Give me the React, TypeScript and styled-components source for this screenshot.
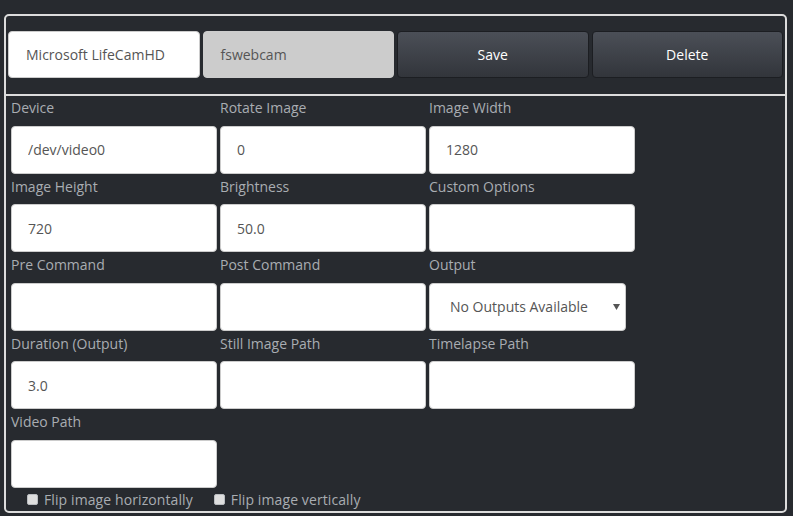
import styled, { createGlobalStyle } from "styled-components";

const Global = createGlobalStyle`
  html, body {
    margin: 0;
    padding: 0;
    background: #272a2f;
  }
  body {
    font-family: "Open Sans", "Liberation Sans", sans-serif;
    font-size: 14px;
  }
`;

const Page = styled.div`
  padding: 14px 6px 4px 4px;
`;

const Panel = styled.div`
  border: 2px solid #dcdcdc;
  border-radius: 5px;
`;

const TopRow = styled.div`
  display: grid;
  grid-template-columns: repeat(4, 1fr);
  gap: 3px;
  padding: 15px 2px 16px;
`;

const NameBox = styled.div<{ $muted?: boolean }>`
  height: 47px;
  display: flex;
  align-items: center;
  padding: 0 17px;
  border: 1px solid #ccc;
  border-radius: 4px;
  background: ${(p) => (p.$muted ? "#cccccc" : "#ffffff")};
  color: #555;
  box-sizing: border-box;
`;

const ActionButton = styled.button`
  height: 47px;
  border: 1px solid #1c1e22;
  border-radius: 4px;
  background: linear-gradient(to bottom, #4b4f57, #32353b);
  color: #ffffff;
  font-family: inherit;
  font-size: 14px;
  font-weight: 500;
  cursor: pointer;
`;

const Divider = styled.div`
  height: 2px;
  background: #dcdcdc;
`;

const Form = styled.div`
  padding: 2px 5px 0;
`;

const FieldGrid = styled.div`
  display: grid;
  grid-template-columns: repeat(3, 206px);
  column-gap: 3px;
`;

const Field = styled.div`
  display: flex;
  flex-direction: column;
  margin-bottom: 3px;
`;

const Label = styled.label`
  color: #a9adb2;
  line-height: 19.5px;
  margin-bottom: 8px;
`;

const TextInput = styled.input`
  height: 48px;
  box-sizing: border-box;
  border: 1px solid #ccc;
  border-radius: 4px;
  padding: 0 16px;
  font-family: inherit;
  font-size: 14px;
  color: #555;
  background: #fff;
  outline: none;
`;

const SelectBox = styled.div`
  width: 197px;
  height: 48px;
  box-sizing: border-box;
  border: 1px solid #ccc;
  border-radius: 4px;
  background: #fff;
  color: #555;
  display: flex;
  align-items: center;
  padding: 0 5px 0 20px;
`;

const Arrow = styled.svg`
  margin-left: auto;
  width: 7px;
  height: 6px;
`;

const CheckRow = styled.div`
  display: flex;
  align-items: center;
  height: 17px;
  padding: 0 0 3px 16px;
`;

const CheckLabel = styled.label`
  display: flex;
  align-items: center;
  color: #a9adb2;
  margin-right: 21px;
  letter-spacing: 0.1px;
`;

const Box = styled.span`
  width: 11px;
  height: 11px;
  border: 1px solid #b9bcc0;
  border-radius: 2px;
  background: #dedede;
  margin-right: 6px;
  box-sizing: border-box;
`;

const fields: { label: string; value?: string; select?: boolean }[] = [
  { label: "Device", value: "/dev/video0" },
  { label: "Rotate Image", value: "0" },
  { label: "Image Width", value: "1280" },
  { label: "Image Height", value: "720" },
  { label: "Brightness", value: "50.0" },
  { label: "Custom Options" },
  { label: "Pre Command" },
  { label: "Post Command" },
  { label: "Output", select: true },
  { label: "Duration (Output)", value: "3.0" },
  { label: "Still Image Path" },
  { label: "Timelapse Path" },
  { label: "Video Path" },
];

export default function App() {
  return (
    <Page>
      <Global />
      <Panel>
        <TopRow>
          <NameBox>Microsoft LifeCamHD</NameBox>
          <NameBox $muted>fswebcam</NameBox>
          <ActionButton>Save</ActionButton>
          <ActionButton>Delete</ActionButton>
        </TopRow>
        <Divider />
        <Form>
          <FieldGrid>
            {fields.map((f) => (
              <Field key={f.label}>
                <Label>{f.label}</Label>
                {f.select ? (
                  <SelectBox>
                    No Outputs Available
                    <Arrow viewBox="0 0 7 6">
                      <path d="M0 0 H7 L3.5 6 Z" fill="#555" />
                    </Arrow>
                  </SelectBox>
                ) : (
                  <TextInput defaultValue={f.value ?? ""} />
                )}
              </Field>
            ))}
          </FieldGrid>
          <CheckRow>
            <CheckLabel>
              <Box />
              Flip image horizontally
            </CheckLabel>
            <CheckLabel>
              <Box />
              Flip image vertically
            </CheckLabel>
          </CheckRow>
        </Form>
      </Panel>
    </Page>
  );
}
